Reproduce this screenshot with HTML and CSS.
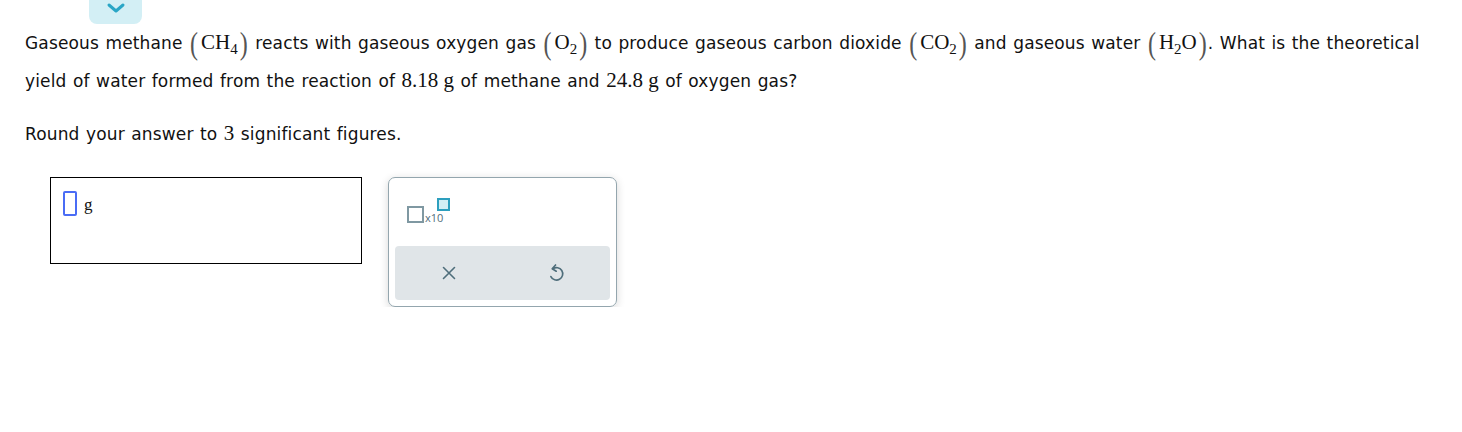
FILE: index.html
```html
<!DOCTYPE html>
<html>
<head>
<meta charset="utf-8">
<link rel="stylesheet" href="styles.css">
</head>
<body>
<div class="tab">
  <svg width="20" height="12" viewBox="0 0 20 12"><path d="M3 3 L10 9 L17 3" fill="none" stroke="#2aa6c6" stroke-width="3" stroke-linecap="round" stroke-linejoin="round"/></svg>
</div>
<div class="question">
  <p class="para">Gaseous methane <span class="m"><span class="par open">(</span>CH<sub>4</sub><span class="par close">)</span></span> reacts with gaseous oxygen gas <span class="m"><span class="par open">(</span>O<sub>2</sub><span class="par close">)</span></span> to produce gaseous carbon dioxide <span class="m"><span class="par open">(</span>CO<sub>2</sub><span class="par close">)</span></span> and gaseous water <span class="m"><span class="par open">(</span>H<sub>2</sub>O<span class="par close">)</span></span>. What is the theoretical yield of water formed from the reaction of <span class="m">8.18 g</span> of methane and <span class="m">24.8 g</span> of oxygen gas?</p>
  <p class="para round">Round your answer to <span class="m">3</span> significant figures.</p>
</div>
<div class="answer-row">
  <div class="answer-box">
    <span class="slot"></span><span class="unit">g</span>
  </div>
  <div class="keypad">
    <div class="keys">
      <div class="sci">
        <span class="base"></span><span class="x10">x10</span><span class="exp"></span>
      </div>
    </div>
    <div class="actions">
      <button class="act">
        <svg width="16" height="16" viewBox="0 0 16 16"><path d="M2.5 2.5 L13.5 13.5 M13.5 2.5 L2.5 13.5" stroke="#4f6e7b" stroke-width="1.6" fill="none" stroke-linecap="round"/></svg>
      </button>
      <button class="act">
        <svg width="18" height="20" viewBox="0 0 16 18"><path d="M5.2 5.2 A5.6 5.6 0 1 1 3.4 12.2" fill="none" stroke="#4f6e7b" stroke-width="1.5" stroke-linecap="round"/><path d="M7.6 1.8 L4.6 5.2 L8.2 7.4" fill="none" stroke="#4f6e7b" stroke-width="1.5" stroke-linecap="round" stroke-linejoin="round"/></svg>
      </button>
    </div>
  </div>
</div>
</body>
</html>
```

FILE: styles.css
```css
html, body {
  margin: 0;
  padding: 0;
  background: #ffffff;
}
body {
  font-family: "DejaVu Sans", Verdana, sans-serif;
  font-size: 17px;
  color: #111111;
}
.tab {
  width: 53px;
  height: 24px;
  margin-left: 89px;
  background: #d3eff5;
  border-radius: 0 0 8px 8px;
  display: flex;
  justify-content: center;
  align-items: flex-start;
  padding-top: 2px;
  box-sizing: border-box;
}
.question {
  padding-left: 25px;
}
.para {
  margin: 0;
  line-height: 37px;
  width: 1412px;
  letter-spacing: 0.15px;
  word-spacing: 0.9px;
}
.round {
  margin-top: 15px;
}
.m {
  font-family: "Liberation Serif", "Times New Roman", serif;
  font-size: 21px;
  color: #111;
  letter-spacing: 0;
  word-spacing: 0;
}
.m sub {
  font-size: 15px;
  vertical-align: -5px;
  line-height: 0;
}
.par {
  display: inline-block;
  font-size: 24px;
  color: #555;
  vertical-align: -2px;
  line-height: 20px;
  transform: scaleY(1.35);
}
.open {
  margin-left: 1px;
  margin-right: 3px;
}
.close {
  margin-left: 2px;
  margin-right: 1px;
}
.answer-row {
  display: flex;
  gap: 26px;
  margin-left: 50px;
  margin-top: 24px;
  align-items: flex-start;
}
.answer-box {
  width: 312px;
  height: 87px;
  box-sizing: border-box;
  border: 1px solid #000;
  padding: 13px 12px;
  display: flex;
  align-items: flex-start;
}
.slot {
  width: 14px;
  height: 25px;
  box-sizing: border-box;
  border: 2px solid #4a6cf5;
  border-radius: 2px;
}
.unit {
  font-family: "Liberation Serif", "Times New Roman", serif;
  font-size: 17px;
  margin-left: 7px;
  margin-top: 4px;
}
.keypad {
  width: 229px;
  height: 130px;
  box-sizing: border-box;
  border: 1px solid #94a6ae;
  border-radius: 7px;
  box-shadow: 0 2px 8px rgba(0, 0, 0, 0.16);
  padding: 0 6px 6px 6px;
  display: flex;
  flex-direction: column;
}
.keys {
  flex: 1;
  padding-left: 12px;
  padding-top: 20px;
}
.sci {
  position: relative;
  width: 46px;
  height: 30px;
}
.base {
  position: absolute;
  left: 0;
  top: 8px;
  width: 17px;
  height: 17px;
  box-sizing: border-box;
  border: 2px solid #7f98a2;
}
.x10 {
  position: absolute;
  left: 18px;
  top: 14px;
  font-family: "Open Sans", "DejaVu Sans", sans-serif;
  font-size: 11px;
  color: #4f6e7b;
  line-height: 12px;
}
.exp {
  position: absolute;
  left: 30px;
  top: 0;
  width: 13px;
  height: 13px;
  box-sizing: border-box;
  border: 2px solid #2d9fbe;
  background: #d3eff5;
}
.actions {
  height: 54px;
  background: #e0e5e8;
  border-radius: 4px;
  display: flex;
}
.act {
  flex: 1;
  border: 0;
  background: transparent;
  padding: 0;
  display: flex;
  align-items: center;
  justify-content: center;
}
```
